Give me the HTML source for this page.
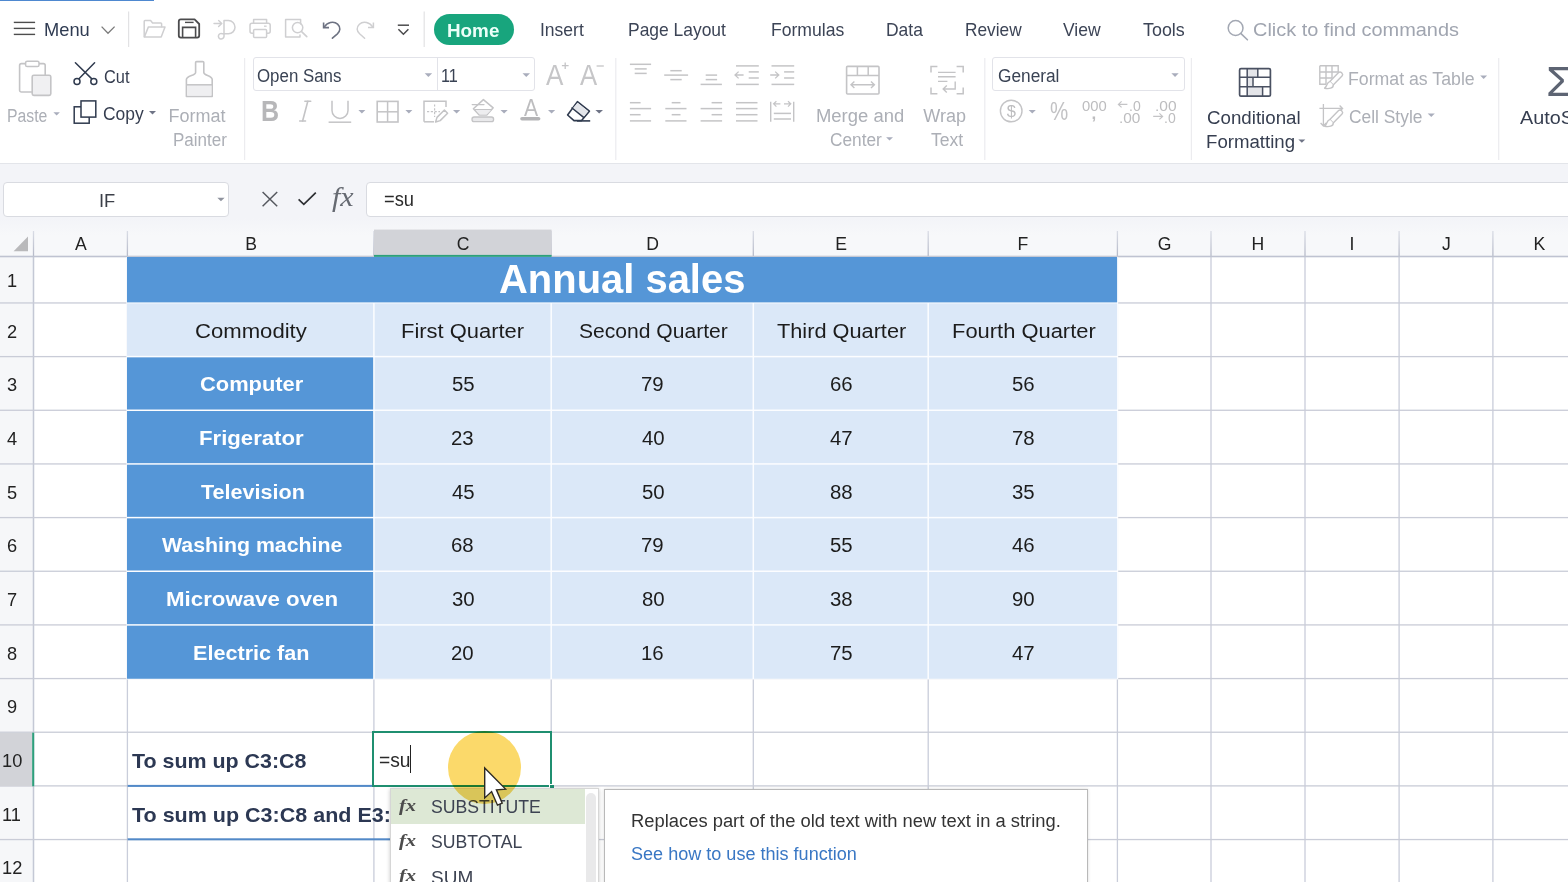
<!DOCTYPE html>
<html lang="en">
<head>
<meta charset="utf-8">
<title>Annual sales - Spreadsheet</title>
<style>
html,body{margin:0;padding:0;background:#fff;}
body{width:1568px;height:882px;overflow:hidden;position:relative;font-family:"Liberation Sans",sans-serif;}
#app{position:absolute;left:0;top:0;width:1568px;height:882px;overflow:hidden;background:#fff;}
#app div,#app svg,#app span.t{position:absolute;}
#app div{box-sizing:border-box;}
#app svg{overflow:visible;}
.t{white-space:nowrap;line-height:1;transform-origin:0 0;}

.gl{background:#c8ccd6;}
</style>
</head>
<body>
<div id="app">
<div style="left:0px;top:0px;width:1568px;height:164px;background:#fff;"></div>
<div style="left:0px;top:0px;width:153.8px;height:1.3px;background:#4e88d0;"></div>
<div style="left:0px;top:163px;width:1568px;height:1px;background:#e3e5ea;"></div>
<div style="left:0px;top:164px;width:1568px;height:66px;background:#f3f4f8;"></div>
<div style="left:3px;top:182px;width:226px;height:35px;background:#fff;border:1px solid #d9dbe1;border-radius:4px;"></div>
<div style="left:366px;top:182px;width:1220px;height:35px;background:#fff;border:1px solid #d9dbe1;border-radius:4px;"></div>
<div style="left:0px;top:230px;width:1568px;height:652px;background:#fff;"></div>
<div style="left:0px;top:218px;width:1568px;height:39px;background:linear-gradient(#f3f4f8,#f7f8fa 45%);"></div>
<div style="left:0px;top:257px;width:34px;height:625px;background:#f6f7f9;"></div>
<svg style="left:0px;top:0px;" width="1568" height="882" viewBox="0 0 1568 882" fill="none"><defs><linearGradient id="hs" x1="0" y1="0" x2="0" y2="1"><stop offset="0" stop-color="#d9dce5"/><stop offset="1" stop-color="#b4b8c7"/></linearGradient></defs><rect x="32.85" y="256.00" width="1.30" height="626.00" fill="#c9cdda"/><rect x="126.75" y="256.00" width="1.30" height="626.00" fill="#c9cdda"/><rect x="373.25" y="256.00" width="1.30" height="626.00" fill="#c9cdda"/><rect x="550.55" y="256.00" width="1.30" height="626.00" fill="#c9cdda"/><rect x="752.65" y="256.00" width="1.30" height="626.00" fill="#c9cdda"/><rect x="927.55" y="256.00" width="1.30" height="626.00" fill="#c9cdda"/><rect x="1116.75" y="256.00" width="1.30" height="626.00" fill="#c9cdda"/><rect x="1210.35" y="256.00" width="1.30" height="626.00" fill="#c9cdda"/><rect x="1304.35" y="256.00" width="1.30" height="626.00" fill="#c9cdda"/><rect x="1398.45" y="256.00" width="1.30" height="626.00" fill="#c9cdda"/><rect x="1492.25" y="256.00" width="1.30" height="626.00" fill="#c9cdda"/><rect x="32.85" y="256.00" width="1.30" height="626.00" fill="#c4c8d5"/><rect x="32.85" y="231" width="1.3" height="26" fill="url(#hs)"/><rect x="126.75" y="231" width="1.3" height="26" fill="url(#hs)"/><rect x="373.25" y="231" width="1.3" height="26" fill="url(#hs)"/><rect x="550.55" y="231" width="1.3" height="26" fill="url(#hs)"/><rect x="752.65" y="231" width="1.3" height="26" fill="url(#hs)"/><rect x="927.55" y="231" width="1.3" height="26" fill="url(#hs)"/><rect x="1116.75" y="231" width="1.3" height="26" fill="url(#hs)"/><rect x="1210.35" y="231" width="1.3" height="26" fill="url(#hs)"/><rect x="1304.35" y="231" width="1.3" height="26" fill="url(#hs)"/><rect x="1398.45" y="231" width="1.3" height="26" fill="url(#hs)"/><rect x="1492.25" y="231" width="1.3" height="26" fill="url(#hs)"/><rect x="0.00" y="255.85" width="1568.00" height="1.30" fill="#c9ccd7"/><rect x="0.00" y="302.30" width="1568.00" height="1.30" fill="#c9ccd7"/><rect x="0.00" y="355.96" width="1568.00" height="1.30" fill="#c9ccd7"/><rect x="0.00" y="409.62" width="1568.00" height="1.30" fill="#c9ccd7"/><rect x="0.00" y="463.28" width="1568.00" height="1.30" fill="#c9ccd7"/><rect x="0.00" y="516.94" width="1568.00" height="1.30" fill="#c9ccd7"/><rect x="0.00" y="570.60" width="1568.00" height="1.30" fill="#c9ccd7"/><rect x="0.00" y="624.26" width="1568.00" height="1.30" fill="#c9ccd7"/><rect x="0.00" y="677.92" width="1568.00" height="1.30" fill="#c9ccd7"/><rect x="0.00" y="731.58" width="1568.00" height="1.30" fill="#c9ccd7"/><rect x="0.00" y="785.24" width="1568.00" height="1.30" fill="#c9ccd7"/><rect x="0.00" y="838.90" width="1568.00" height="1.30" fill="#c9ccd7"/><rect x="0.00" y="255.80" width="1568.00" height="1.40" fill="#bfc3d1"/><rect x="374.00" y="229.60" width="177.60" height="26.90" fill="#d2d3d8"/><rect x="0.00" y="732.63" width="33.50" height="53.66" fill="#d2d3d8"/><rect x="374.00" y="254.90" width="177.60" height="2.10" fill="#2da07c"/><rect x="32.20" y="732.63" width="2.00" height="53.66" fill="#2da07c"/><rect x="126.40" y="256.90" width="991.80" height="422.57" fill="#fcfdff"/><rect x="127.00" y="257.00" width="990.10" height="45.40" fill="#5596d7"/><rect x="127.00" y="303.40" width="246.15" height="52.46" fill="#dbe8f8"/><rect x="374.65" y="303.40" width="175.80" height="52.46" fill="#dbe8f8"/><rect x="551.95" y="303.40" width="200.60" height="52.46" fill="#dbe8f8"/><rect x="754.05" y="303.40" width="173.40" height="52.46" fill="#dbe8f8"/><rect x="928.95" y="303.40" width="188.15" height="52.46" fill="#dbe8f8"/><rect x="127.00" y="357.36" width="246.15" height="52.16" fill="#5596d7"/><rect x="374.65" y="357.36" width="175.80" height="52.16" fill="#dbe8f8"/><rect x="551.95" y="357.36" width="200.60" height="52.16" fill="#dbe8f8"/><rect x="754.05" y="357.36" width="173.40" height="52.16" fill="#dbe8f8"/><rect x="928.95" y="357.36" width="188.15" height="52.16" fill="#dbe8f8"/><rect x="127.00" y="411.02" width="246.15" height="52.16" fill="#5596d7"/><rect x="374.65" y="411.02" width="175.80" height="52.16" fill="#dbe8f8"/><rect x="551.95" y="411.02" width="200.60" height="52.16" fill="#dbe8f8"/><rect x="754.05" y="411.02" width="173.40" height="52.16" fill="#dbe8f8"/><rect x="928.95" y="411.02" width="188.15" height="52.16" fill="#dbe8f8"/><rect x="127.00" y="464.68" width="246.15" height="52.16" fill="#5596d7"/><rect x="374.65" y="464.68" width="175.80" height="52.16" fill="#dbe8f8"/><rect x="551.95" y="464.68" width="200.60" height="52.16" fill="#dbe8f8"/><rect x="754.05" y="464.68" width="173.40" height="52.16" fill="#dbe8f8"/><rect x="928.95" y="464.68" width="188.15" height="52.16" fill="#dbe8f8"/><rect x="127.00" y="518.34" width="246.15" height="52.16" fill="#5596d7"/><rect x="374.65" y="518.34" width="175.80" height="52.16" fill="#dbe8f8"/><rect x="551.95" y="518.34" width="200.60" height="52.16" fill="#dbe8f8"/><rect x="754.05" y="518.34" width="173.40" height="52.16" fill="#dbe8f8"/><rect x="928.95" y="518.34" width="188.15" height="52.16" fill="#dbe8f8"/><rect x="127.00" y="572.00" width="246.15" height="52.16" fill="#5596d7"/><rect x="374.65" y="572.00" width="175.80" height="52.16" fill="#dbe8f8"/><rect x="551.95" y="572.00" width="200.60" height="52.16" fill="#dbe8f8"/><rect x="754.05" y="572.00" width="173.40" height="52.16" fill="#dbe8f8"/><rect x="928.95" y="572.00" width="188.15" height="52.16" fill="#dbe8f8"/><rect x="127.00" y="625.66" width="246.15" height="53.11" fill="#5596d7"/><rect x="374.65" y="625.66" width="175.80" height="53.11" fill="#dbe8f8"/><rect x="551.95" y="625.66" width="200.60" height="53.11" fill="#dbe8f8"/><rect x="754.05" y="625.66" width="173.40" height="53.11" fill="#dbe8f8"/><rect x="928.95" y="625.66" width="188.15" height="53.11" fill="#dbe8f8"/></svg>
<svg style="left:0;top:230px" width="34" height="27" viewBox="0 0 34 27"><path d="M28 6.6 V21.2 H13.6 Z" fill="#b9b9bb"/></svg>
<div style="left:433.5px;top:13.6px;width:80px;height:31.4px;background:#18a57d;border-radius:16px;"></div>
<div style="left:253.3px;top:57.3px;width:282.2px;height:33.6px;border:1px solid #e2e3e9;border-radius:3px;background:#fff;"></div>
<div style="left:437px;top:58px;width:1px;height:32px;background:#e2e3e9;"></div>
<div style="left:992.2px;top:57.3px;width:192.6px;height:33.6px;border:1px solid #e2e3e9;border-radius:3px;background:#fff;"></div>
<svg style="left:0px;top:0px;" width="1568" height="240" viewBox="0 0 1568 240" fill="none"><line x1="13.8" y1="22.4" x2="35.1" y2="22.4" stroke="#4d4d4d" stroke-width="1.4" stroke-linecap="butt"/><line x1="13.8" y1="28.4" x2="35.1" y2="28.4" stroke="#4d4d4d" stroke-width="1.4" stroke-linecap="butt"/><line x1="13.8" y1="34.4" x2="35.1" y2="34.4" stroke="#4d4d4d" stroke-width="1.4" stroke-linecap="butt"/><path d="M101.6 26.6 L108 33.2 L114.6 26.6" stroke="#7a7a7a" stroke-width="1.3" fill="none" stroke-linecap="butt" stroke-linejoin="miter"/><line x1="128.6" y1="11.5" x2="128.6" y2="47" stroke="#e2e2e4" stroke-width="1.2" stroke-linecap="butt"/><line x1="424.2" y1="11.5" x2="424.2" y2="47" stroke="#e2e2e4" stroke-width="1.2" stroke-linecap="butt"/><path d="M144.2 36.8 V21.4 a0.8 0.8 0 0 1 .8 -.8 h5.6 l2 2.4 h8.2 a.8 .8 0 0 1 .8 .8 v3" stroke="#cfcfd1" stroke-width="1.5" fill="none" stroke-linecap="round" stroke-linejoin="round"/><path d="M144.4 37 L148.4 26.9 H165 L161.2 37 Z" stroke="#cfcfd1" stroke-width="1.5" fill="none" stroke-linecap="round" stroke-linejoin="round"/><path d="M180.8 19.4 H194.6 L199.2 24 V35.6 a2 2 0 0 1 -2 2 H180.8 a2 2 0 0 1 -2 -2 V21.4 a2 2 0 0 1 2 -2 Z" stroke="#4b4b4d" stroke-width="1.8" fill="none" stroke-linecap="round" stroke-linejoin="round"/><path d="M182.6 37.2 V27.4 H195.6 V37.2" stroke="#4b4b4d" stroke-width="1.6" fill="none" stroke-linecap="butt" stroke-linejoin="miter"/><line x1="185" y1="22.4" x2="193.6" y2="22.4" stroke="#4b4b4d" stroke-width="1.4" stroke-linecap="butt"/><path d="M214 23.5 H221.6 M218.6 20.6 L221.8 23.5 L218.6 26.6" stroke="#cfcfd1" stroke-width="1.4" fill="none" stroke-linecap="round" stroke-linejoin="round"/><path d="M224 35.4 V20.6 H228.4 a6.6 6.6 0 0 1 0 13.2 H222.6 a2.8 2.8 0 1 0 1.4 2.6 Z" stroke="#cfcfd1" stroke-width="1.5" fill="none" stroke-linecap="round" stroke-linejoin="round"/><path d="M253.6 23.2 V19.4 H266.6 V23.2" stroke="#cfcfd1" stroke-width="1.5" fill="none" stroke-linecap="round" stroke-linejoin="round"/><rect x="250" y="23.2" width="20.2" height="10" rx="2" stroke="#cfcfd1" stroke-width="1.5" fill="none"/><rect x="253.6" y="29.6" width="13" height="8" rx="1" stroke="#cfcfd1" stroke-width="1.5" fill="#fff"/><line x1="264" y1="26.2" x2="266.6" y2="26.2" stroke="#cfcfd1" stroke-width="1.3" stroke-linecap="butt"/><path d="M300 35 V37 H285.6 V19.4 H300.6 V24" stroke="#cfcfd1" stroke-width="1.5" fill="none" stroke-linecap="round" stroke-linejoin="round"/><circle cx="297.6" cy="27.6" r="5.2" stroke="#cfcfd1" stroke-width="1.5"/><line x1="301.6" y1="31.6" x2="306.8" y2="36.6" stroke="#cfcfd1" stroke-width="1.6" stroke-linecap="round"/><path d="M323.6 22.6 V27.6 H329" stroke="#6d7282" stroke-width="1.6" fill="none" stroke-linecap="butt" stroke-linejoin="miter"/><path d="M324.2 27.2 C327 22.4 333.6 20.6 337.6 24.2 C341 27.4 340.2 31.2 337.4 33.8 L332.4 38.2" stroke="#6d7282" stroke-width="1.6" fill="none" stroke-linecap="round" stroke-linejoin="round"/><path d="M373.4 22.6 V27.6 H368" stroke="#cfcfd1" stroke-width="1.5" fill="none" stroke-linecap="butt" stroke-linejoin="miter"/><path d="M372.8 27.2 C370 22.4 363.4 20.6 359.4 24.2 C356 27.4 356.8 31.2 359.6 33.8 L364.6 38.2" stroke="#cfcfd1" stroke-width="1.5" fill="none" stroke-linecap="round" stroke-linejoin="round"/><line x1="397.8" y1="25.2" x2="409" y2="25.2" stroke="#4b4b4d" stroke-width="1.5" stroke-linecap="butt"/><path d="M398.4 29.2 L403.4 34.2 L408.4 29.2" stroke="#4b4b4d" stroke-width="1.5" fill="none" stroke-linecap="butt" stroke-linejoin="miter"/><circle cx="1235.6" cy="28" r="7.4" stroke="#a3a8b3" stroke-width="1.5"/><line x1="1241" y1="33.6" x2="1247.4" y2="39.8" stroke="#a3a8b3" stroke-width="1.6" stroke-linecap="round"/><line x1="244.6" y1="58" x2="244.6" y2="160" stroke="#ececef" stroke-width="1.2" stroke-linecap="butt"/><line x1="615.8" y1="58" x2="615.8" y2="160" stroke="#ececef" stroke-width="1.2" stroke-linecap="butt"/><line x1="984.8" y1="58" x2="984.8" y2="160" stroke="#ececef" stroke-width="1.2" stroke-linecap="butt"/><line x1="1191.4" y1="58" x2="1191.4" y2="160" stroke="#ececef" stroke-width="1.2" stroke-linecap="butt"/><line x1="1498.7" y1="58" x2="1498.7" y2="160" stroke="#ececef" stroke-width="1.2" stroke-linecap="butt"/><path d="M424.7 73.3H432.1L428.4 77Z" fill="#a9adbc"/><path d="M522.5 73.3H530L526.25 77Z" fill="#a9adbc"/><path d="M1171.4 73.3H1178.7L1175.0500000000002 77Z" fill="#a9adbc"/><path d="M53.4 112.3H59.9L56.65 115.6Z" fill="#a9adbc"/><path d="M453 110H460.2L456.6 113.5Z" fill="#a9adbc"/><path d="M500.5 110H507.7L504.1 113.5Z" fill="#a9adbc"/><path d="M548 110H555.2L551.6 113.5Z" fill="#a9adbc"/><path d="M358.4 110H365.4L361.9 113.5Z" fill="#a9adbc"/><path d="M405.4 110H412.4L408.9 113.5Z" fill="#a9adbc"/><path d="M1028.7 110H1035.8L1032.25 113.5Z" fill="#a9adbc"/><path d="M886.1 137.3H893L889.55 140.6Z" fill="#a9adbc"/><path d="M1480.2 75.6H1487.1L1483.65 79.1Z" fill="#a9adbc"/><path d="M1427.7 113.4H1434.8L1431.25 116.9Z" fill="#a9adbc"/><path d="M149 111H156L152.5 114.6Z" fill="#6f7486"/><path d="M595.4 110H603L599.2 113.5Z" fill="#6f7486"/><path d="M1298.4 139.4H1305.3L1301.85 142.7Z" fill="#6f7486"/><path d="M31.8 92 H21.4 a1.8 1.8 0 0 1 -1.8 -1.8 V65.4 a1.8 1.8 0 0 1 1.8 -1.8 H43.4 a1.8 1.8 0 0 1 1.8 1.8 V75" stroke="#c4c4c6" stroke-width="1.6" fill="none" stroke-linecap="round" stroke-linejoin="round"/><rect x="25.6" y="61.2" width="13.4" height="5.4" rx="1.6" stroke="#c4c4c6" stroke-width="1.5" fill="#fff"/><rect x="32.2" y="75.2" width="18.6" height="20.2" rx="1.6" stroke="#c4c4c6" stroke-width="1.6" fill="#f0f0f2"/><line x1="75.4" y1="62.8" x2="91.6" y2="78.6" stroke="#2f3a4e" stroke-width="1.5" stroke-linecap="round"/><line x1="94.6" y1="62.8" x2="79.2" y2="78.6" stroke="#2f3a4e" stroke-width="1.5" stroke-linecap="round"/><circle cx="77" cy="81.4" r="3" stroke="#2f3a4e" stroke-width="1.5"/><circle cx="93.8" cy="81.4" r="3" stroke="#2f3a4e" stroke-width="1.5"/><rect x="74.2" y="106.8" width="15" height="16.4" rx="0" stroke="#2f3a4e" stroke-width="1.5" fill="none"/><rect x="81" y="100.9" width="14.8" height="16.2" rx="0" stroke="#2f3a4e" stroke-width="1.5" fill="#fff"/><path d="M195.6 72.4 V62.6 a1 1 0 0 1 1 -1 H202.8 a1 1 0 0 1 1 1 V72.4 C203.8 75.6 212.2 75.4 212.2 79.6 V96.4 H186.4 V79.6 C186.4 75.4 195.6 75.6 195.6 72.4 Z" stroke="#c4c4c6" stroke-width="1.6" fill="none" stroke-linecap="round" stroke-linejoin="round"/><rect x="187.2" y="85" width="24.2" height="10.8" fill="#efeff1"/><line x1="186.4" y1="84.8" x2="212.2" y2="84.8" stroke="#c4c4c6" stroke-width="1.5" stroke-linecap="butt"/><path d="M307.8 101.2 L302.6 121" stroke="#c4c4c6" stroke-width="1.6" fill="none" stroke-linecap="round" stroke-linejoin="round"/><path d="M304.8 101.2 H310.8 M299.6 121 H305.6" stroke="#c4c4c6" stroke-width="1.4" fill="none" stroke-linecap="round" stroke-linejoin="round"/><path d="M332 100.8 V110.4 a8 8 0 0 0 16 0 V100.8" stroke="#c4c4c6" stroke-width="1.5" fill="none" stroke-linecap="butt" stroke-linejoin="round"/><line x1="328.6" y1="122.2" x2="351.2" y2="122.2" stroke="#c4c4c6" stroke-width="1.5" stroke-linecap="butt"/><rect x="377.2" y="101.4" width="20.8" height="20.6" rx="0" stroke="#c4c4c6" stroke-width="1.6" fill="none"/><line x1="387.6" y1="101.4" x2="387.6" y2="122" stroke="#c4c4c6" stroke-width="1.5" stroke-linecap="butt"/><line x1="377.2" y1="111.8" x2="398" y2="111.8" stroke="#c4c4c6" stroke-width="1.5" stroke-linecap="butt"/><path d="M424 121.8 V101.2 H446 V107" stroke="#c4c4c6" stroke-width="1.5" fill="none" stroke-linecap="butt" stroke-linejoin="miter"/><path d="M424 121.8 H434" stroke="#c4c4c6" stroke-width="1.5" fill="none" stroke-linecap="butt" stroke-linejoin="round"/><path d="M427 111.6 H440 M434.6 104.4 V117" stroke="#c4c4c6" stroke-width="1.2" stroke-dasharray="2.2 1.6"/><path d="M435.6 122 L437 117.4 L444.4 110 L447.6 113.2 L440.2 120.6 Z" stroke="#c4c4c6" stroke-width="1.5" fill="#fff" stroke-linecap="round" stroke-linejoin="round"/><path d="M483.4 99.6 L493.2 107.8 L486.8 115 H479.2 L473.4 108.8 Z" stroke="#c4c4c6" stroke-width="1.5" fill="#fff" stroke-linecap="round" stroke-linejoin="round"/><path d="M472.2 104.6 H484 M475.4 109.6 H491.6" stroke="#c4c4c6" stroke-width="1.3" fill="none" stroke-linecap="round" stroke-linejoin="round"/><path d="M476 110.2 H491 L486.6 114.6 H479.6 Z" fill="#ededef"/><rect x="472" y="117" width="21.6" height="4.6" rx="2.2" stroke="#c4c4c6" stroke-width="1.3" fill="#e9e9eb"/><rect x="520.2" y="117" width="20.2" height="3.6" rx="1.8" fill="#b4b4b6"/><path d="M577.4 101.6 L589.4 111.2 L581.6 120.6 H574 L567.6 115 Z" stroke="#2f3a4e" stroke-width="1.6" fill="#fff" stroke-linecap="round" stroke-linejoin="round"/><path d="M577.6 102.8 L588.2 111.2 L583.4 117 L572.6 108.6 Z" fill="#e3e5ea"/><path d="M572 108 L583.6 117.4" stroke="#2f3a4e" stroke-width="1.5" fill="none" stroke-linecap="round" stroke-linejoin="round"/><line x1="577" y1="120.9" x2="590.2" y2="120.9" stroke="#2f3a4e" stroke-width="1.6" stroke-linecap="butt"/><path d="M561.9 65.7 H568.6 M565.2 62.4 V69" stroke="#c4c4c6" stroke-width="1.3" fill="none" stroke-linecap="butt" stroke-linejoin="round"/><path d="M596.6 66 H603.8" stroke="#c4c4c6" stroke-width="1.3" fill="none" stroke-linecap="butt" stroke-linejoin="round"/><line x1="629.9" y1="64.3" x2="651.1" y2="64.3" stroke="#c4c4c6" stroke-width="1.5" stroke-linecap="butt"/><line x1="634.7" y1="68.9" x2="646.7" y2="68.9" stroke="#c4c4c6" stroke-width="1.5" stroke-linecap="butt"/><line x1="634.7" y1="73.4" x2="646.7" y2="73.4" stroke="#c4c4c6" stroke-width="1.5" stroke-linecap="butt"/><line x1="670.3" y1="70.7" x2="681.7" y2="70.7" stroke="#c4c4c6" stroke-width="1.5" stroke-linecap="butt"/><line x1="664.2" y1="75.1" x2="688.1" y2="75.1" stroke="#c4c4c6" stroke-width="1.5" stroke-linecap="butt"/><line x1="670.3" y1="79.6" x2="681.7" y2="79.6" stroke="#c4c4c6" stroke-width="1.5" stroke-linecap="butt"/><line x1="705.7" y1="75.1" x2="717.1" y2="75.1" stroke="#c4c4c6" stroke-width="1.5" stroke-linecap="butt"/><line x1="705.7" y1="79.6" x2="717.1" y2="79.6" stroke="#c4c4c6" stroke-width="1.5" stroke-linecap="butt"/><line x1="700.6" y1="84.4" x2="721.9" y2="84.4" stroke="#c4c4c6" stroke-width="1.5" stroke-linecap="butt"/><line x1="736" y1="65.9" x2="758.8" y2="65.9" stroke="#c4c4c6" stroke-width="1.5" stroke-linecap="butt"/><line x1="748.7" y1="71.9" x2="758.8" y2="71.9" stroke="#c4c4c6" stroke-width="1.5" stroke-linecap="butt"/><line x1="748.7" y1="78" x2="758.8" y2="78" stroke="#c4c4c6" stroke-width="1.5" stroke-linecap="butt"/><line x1="736" y1="84.4" x2="758.8" y2="84.4" stroke="#c4c4c6" stroke-width="1.5" stroke-linecap="butt"/><line x1="771.5" y1="65.9" x2="794.2" y2="65.9" stroke="#c4c4c6" stroke-width="1.5" stroke-linecap="butt"/><line x1="784.1" y1="71.9" x2="794.2" y2="71.9" stroke="#c4c4c6" stroke-width="1.5" stroke-linecap="butt"/><line x1="784.1" y1="78" x2="794.2" y2="78" stroke="#c4c4c6" stroke-width="1.5" stroke-linecap="butt"/><line x1="771.5" y1="84.4" x2="794.2" y2="84.4" stroke="#c4c4c6" stroke-width="1.5" stroke-linecap="butt"/><line x1="629.9" y1="102.7" x2="640.6" y2="102.7" stroke="#c4c4c6" stroke-width="1.5" stroke-linecap="butt"/><line x1="629.9" y1="108.6" x2="651.1" y2="108.6" stroke="#c4c4c6" stroke-width="1.5" stroke-linecap="butt"/><line x1="629.9" y1="114.7" x2="640.6" y2="114.7" stroke="#c4c4c6" stroke-width="1.5" stroke-linecap="butt"/><line x1="629.9" y1="120.9" x2="651.1" y2="120.9" stroke="#c4c4c6" stroke-width="1.5" stroke-linecap="butt"/><line x1="671.7" y1="102.7" x2="680.5" y2="102.7" stroke="#c4c4c6" stroke-width="1.5" stroke-linecap="butt"/><line x1="665.3" y1="108.6" x2="686.5" y2="108.6" stroke="#c4c4c6" stroke-width="1.5" stroke-linecap="butt"/><line x1="671.7" y1="114.7" x2="680.5" y2="114.7" stroke="#c4c4c6" stroke-width="1.5" stroke-linecap="butt"/><line x1="665.3" y1="120.9" x2="686.5" y2="120.9" stroke="#c4c4c6" stroke-width="1.5" stroke-linecap="butt"/><line x1="711.6" y1="102.7" x2="722.1" y2="102.7" stroke="#c4c4c6" stroke-width="1.5" stroke-linecap="butt"/><line x1="700.6" y1="108.6" x2="722.1" y2="108.6" stroke="#c4c4c6" stroke-width="1.5" stroke-linecap="butt"/><line x1="711.6" y1="114.7" x2="722.1" y2="114.7" stroke="#c4c4c6" stroke-width="1.5" stroke-linecap="butt"/><line x1="700.6" y1="120.9" x2="722.1" y2="120.9" stroke="#c4c4c6" stroke-width="1.5" stroke-linecap="butt"/><line x1="736" y1="102.7" x2="757.5" y2="102.7" stroke="#c4c4c6" stroke-width="1.5" stroke-linecap="butt"/><line x1="736" y1="108.6" x2="757.5" y2="108.6" stroke="#c4c4c6" stroke-width="1.5" stroke-linecap="butt"/><line x1="736" y1="114.7" x2="757.5" y2="114.7" stroke="#c4c4c6" stroke-width="1.5" stroke-linecap="butt"/><line x1="736" y1="120.9" x2="757.5" y2="120.9" stroke="#c4c4c6" stroke-width="1.5" stroke-linecap="butt"/><line x1="773.8" y1="113.4" x2="791" y2="113.4" stroke="#c4c4c6" stroke-width="1.5" stroke-linecap="butt"/><line x1="773.8" y1="119" x2="791" y2="119" stroke="#c4c4c6" stroke-width="1.5" stroke-linecap="butt"/><path d="M743.6 75 H735.2 M738.6 71.6 L735 75 L738.6 78.4" stroke="#c4c4c6" stroke-width="1.3" fill="none" stroke-linecap="butt" stroke-linejoin="miter"/><path d="M770.2 75 H778.6 M775.2 71.6 L778.8 75 L775.2 78.4" stroke="#c4c4c6" stroke-width="1.3" fill="none" stroke-linecap="butt" stroke-linejoin="miter"/><line x1="770.7" y1="101.8" x2="770.7" y2="121.8" stroke="#c4c4c6" stroke-width="1.4" stroke-linecap="butt"/><line x1="793.7" y1="101.8" x2="793.7" y2="121.8" stroke="#c4c4c6" stroke-width="1.4" stroke-linecap="butt"/><path d="M780.4 103.8 H773.6 M776.4 101.2 L773.6 103.8 L776.4 106.6" stroke="#c4c4c6" stroke-width="1.2" fill="none" stroke-linecap="butt" stroke-linejoin="miter"/><path d="M784 103.8 H790.8 M788 101.2 L790.8 103.8 L788 106.6" stroke="#c4c4c6" stroke-width="1.2" fill="none" stroke-linecap="butt" stroke-linejoin="miter"/><rect x="846.6" y="66.4" width="32.4" height="27.6" rx="1" stroke="#c4c4c6" stroke-width="1.6" fill="none"/><line x1="846.6" y1="75.6" x2="879" y2="75.6" stroke="#c4c4c6" stroke-width="1.5" stroke-linecap="butt"/><line x1="857.4" y1="66.4" x2="857.4" y2="75.6" stroke="#c4c4c6" stroke-width="1.5" stroke-linecap="butt"/><line x1="868.2" y1="66.4" x2="868.2" y2="75.6" stroke="#c4c4c6" stroke-width="1.5" stroke-linecap="butt"/><path d="M851 84.8 H874.4 M854.4 81.6 L851 84.8 L854.4 88 M871 81.6 L874.4 84.8 L871 88" stroke="#c4c4c6" stroke-width="1.4" fill="none" stroke-linecap="butt" stroke-linejoin="miter"/><path d="M931 72.6 V66.6 H937.4 M956.6 66.6 H963.2 V72.6 M963.2 87.6 V93.8 H956.6 M937.4 93.8 H931 V87.6" stroke="#c4c4c6" stroke-width="1.5" fill="none" stroke-linecap="butt" stroke-linejoin="miter"/><path d="M938 72.4 H955.6 M938 76.8 H955.6 M938 81.4 H947.4" stroke="#c4c4c6" stroke-width="1.4" fill="none" stroke-linecap="butt" stroke-linejoin="round"/><path d="M955.2 81.6 V89 H943.4 M946.8 85.6 L943.2 89 L946.8 92.4" stroke="#c4c4c6" stroke-width="1.4" fill="none" stroke-linecap="butt" stroke-linejoin="miter"/><circle cx="1011.2" cy="111" r="10.8" stroke="#c4c4c6" stroke-width="1.4"/><path d="M1127.4 104.4 H1118.4 M1121.6 101.4 L1118.4 104.4 L1121.6 107.4" stroke="#c4c4c6" stroke-width="1.2" fill="none" stroke-linecap="butt" stroke-linejoin="miter"/><path d="M1153.2 116.4 H1162.6 M1159.4 113.4 L1162.6 116.4 L1159.4 119.4" stroke="#c4c4c6" stroke-width="1.2" fill="none" stroke-linecap="butt" stroke-linejoin="miter"/><rect x="1247.2" y="68.6" width="10.6" height="8.6" fill="#e4e5e9"/><rect x="1247.2" y="77.2" width="5.8" height="9.6" fill="#e4e5e9"/><rect x="1247.2" y="86.8" width="15.4" height="9.4" fill="#e4e5e9"/><rect x="1239.6" y="68.6" width="30.8" height="27.6" rx="1.4" stroke="#4a5162" stroke-width="1.7" fill="none"/><path d="M1239.6 77.2 H1270.4 M1239.6 86.8 H1270.4 M1247.2 68.6 V96.2 M1257.8 68.6 V77.2 M1253 77.2 V86.8 M1262.6 86.8 V96.2" stroke="#4a5162" stroke-width="1.5" fill="none" stroke-linecap="butt" stroke-linejoin="round"/><path d="M1319.8 65.8 H1338.2 V72 M1319.8 65.8 V84.2 H1326 M1319.8 72 H1338.2 M1319.8 78 H1332 M1326 65.8 V84.2 M1332 65.8 V78" stroke="#c4c4c6" stroke-width="1.4" fill="none" stroke-linecap="butt" stroke-linejoin="miter"/><path d="M1329.8 81.39999999999999 L1338.6000000000001 72.6 a2 2 0 0 1 2.8 0 l0.6 .6 a2 2 0 0 1 0 2.8 L1333.2 85.0 Z" stroke="#c4c4c6" stroke-width="1.4" fill="#fff" stroke-linecap="round" stroke-linejoin="round"/><path d="M1329.8 81.6 C1326.6000000000001 82.0 1327.6000000000001 86.19999999999999 1324.6000000000001 88.19999999999999 C1328.8 89.19999999999999 1333.6000000000001 88.19999999999999 1333.2 85.0" stroke="#c4c4c6" stroke-width="1.4" fill="#fff" stroke-linecap="round" stroke-linejoin="round"/><path d="M1323.4 104 V126 M1319.4 108.4 H1342.6 M1339.6 105.6 L1342.6 108.4 L1339.6 111.2 M1320.6 123 L1323.4 126 L1326.2 123" stroke="#c4c4c6" stroke-width="1.3" fill="none" stroke-linecap="butt" stroke-linejoin="miter"/><path d="M1329.8 119.39999999999999 L1338.6000000000001 110.6 a2 2 0 0 1 2.8 0 l0.6 .6 a2 2 0 0 1 0 2.8 L1333.2 123.0 Z" stroke="#c4c4c6" stroke-width="1.4" fill="#fff" stroke-linecap="round" stroke-linejoin="round"/><path d="M1329.8 119.6 C1326.6000000000001 120.0 1327.6000000000001 124.19999999999999 1324.6000000000001 126.19999999999999 C1328.8 127.19999999999999 1333.6000000000001 126.19999999999999 1333.2 123.0" stroke="#c4c4c6" stroke-width="1.4" fill="#fff" stroke-linecap="round" stroke-linejoin="round"/><path d="M217.3 197.7H224.6L220.95 201.3Z" fill="#8f939e"/><path d="M262.6 192 L277.2 206.2 M277.2 192 L262.6 206.2" stroke="#55585f" stroke-width="1.5" fill="none" stroke-linecap="butt" stroke-linejoin="round"/><path d="M298.6 199.4 L303.8 204.4 L315.8 192.6" stroke="#2d2f33" stroke-width="1.7" fill="none" stroke-linecap="butt" stroke-linejoin="miter"/></svg>
<svg style="left:0px;top:0px;" width="1568" height="882" viewBox="0 0 1568 882" fill="none"><rect x="127.6" y="784.9" width="246" height="2" fill="#5289c8"/><rect x="127.6" y="838.3" width="264" height="2" fill="#5289c8"/></svg>
<div style="left:372.4px;top:731.2px;width:180px;height:56px;background:#fff;border:2px solid #1f8f70;"></div>
<div style="left:548.6px;top:783.6px;width:5.4px;height:4.6px;background:#1f8f70;border-left:1px solid #fff;border-top:1px solid #fff;"></div>
<div style="left:410px;top:744.8px;width:1.1px;height:28px;background:#222;z-index:3;"></div>
<div style="left:389.6px;top:788px;width:209.4px;height:100px;background:#fff;border:1px solid #d6d6d6;box-shadow:0 1px 4px rgba(0,0,0,.22);z-index:4;"></div>
<div style="left:390.8px;top:788.8px;width:193.8px;height:35.4px;background:#dde8d5;z-index:5;"></div>
<div style="left:585.8px;top:793.4px;width:10.2px;height:100px;background:#e9e9ea;border-radius:5px;z-index:5;"></div>
<div style="left:604px;top:789.4px;width:483.6px;height:100px;background:#fff;border:1px solid #b9b9b9;box-shadow:0 0 3px rgba(0,0,0,.15);z-index:4;"></div>
<div style="left:448px;top:730.8px;width:73px;height:73px;background:#fbd96a;border-radius:50%;z-index:7;mix-blend-mode:multiply;"></div>
<svg style="left:480px;top:764px;z-index:8" width="32" height="46" viewBox="0 0 32 46" fill="none"><path d="M4.7 3.9 V34 L11.6 27.6 L17.5 41.2 L22.2 39.2 L16.4 25.9 L25.6 25.1 Z" fill="#fff" stroke="#2e2a22" stroke-width="1.4" stroke-linejoin="miter"/></svg>
<span class="t" style="left:75.05px;top:236px;font-size:17.6px;color:#222;">A</span>
<span class="t" style="left:245.25px;top:236px;font-size:17.6px;color:#222;">B</span>
<span class="t" style="left:456.65px;top:236px;font-size:17.6px;color:#222;">C</span>
<span class="t" style="left:646.35px;top:236px;font-size:17.6px;color:#222;">D</span>
<span class="t" style="left:835.35px;top:236px;font-size:17.6px;color:#222;">E</span>
<span class="t" style="left:1017.40px;top:236px;font-size:17.6px;color:#222;">F</span>
<span class="t" style="left:1157.70px;top:236px;font-size:17.6px;color:#222;">G</span>
<span class="t" style="left:1251.50px;top:236px;font-size:17.6px;color:#222;">H</span>
<span class="t" style="left:1349.55px;top:236px;font-size:17.6px;color:#222;">I</span>
<span class="t" style="left:1442.00px;top:236px;font-size:17.6px;color:#222;">J</span>
<span class="t" style="left:1533.45px;top:236px;font-size:17.6px;color:#222;">K</span>
<span class="t" style="left:6.61px;top:272px;font-size:18.6px;color:#222;transform:scaleX(0.9800);">1</span>
<span class="t" style="left:7.10px;top:323px;font-size:18.6px;color:#222;transform:scaleX(0.9800);">2</span>
<span class="t" style="left:7.10px;top:376px;font-size:18.6px;color:#222;transform:scaleX(0.9800);">3</span>
<span class="t" style="left:7.10px;top:430px;font-size:18.6px;color:#222;transform:scaleX(0.9800);">4</span>
<span class="t" style="left:7.10px;top:484px;font-size:18.6px;color:#222;transform:scaleX(0.9800);">5</span>
<span class="t" style="left:7.10px;top:537px;font-size:18.6px;color:#222;transform:scaleX(0.9800);">6</span>
<span class="t" style="left:7.10px;top:591px;font-size:18.6px;color:#222;transform:scaleX(0.9800);">7</span>
<span class="t" style="left:7.10px;top:645px;font-size:18.6px;color:#222;transform:scaleX(0.9800);">8</span>
<span class="t" style="left:7.10px;top:698px;font-size:18.6px;color:#222;transform:scaleX(0.9800);">9</span>
<span class="t" style="left:1.54px;top:752px;font-size:18.6px;color:#222;transform:scaleX(0.9800);">10</span>
<span class="t" style="left:2.22px;top:806px;font-size:18.6px;color:#222;transform:scaleX(0.9800);">11</span>
<span class="t" style="left:1.54px;top:859px;font-size:18.6px;color:#222;transform:scaleX(0.9800);">12</span>
<span class="t" style="left:499.33px;top:259px;font-size:41px;color:#fff;transform:scaleX(0.9740);font-weight:700;">Annual sales</span>
<span class="t" style="left:195.09px;top:321px;font-size:20px;color:#1c1c1c;transform:scaleX(1.1055);">Commodity</span>
<span class="t" style="left:401.20px;top:321px;font-size:20px;color:#1c1c1c;transform:scaleX(1.0970);">First Quarter</span>
<span class="t" style="left:579.20px;top:321px;font-size:20px;color:#1c1c1c;transform:scaleX(1.0535);">Second Quarter</span>
<span class="t" style="left:776.50px;top:321px;font-size:20px;color:#1c1c1c;transform:scaleX(1.0867);">Third Quarter</span>
<span class="t" style="left:951.60px;top:321px;font-size:20px;color:#1c1c1c;transform:scaleX(1.0958);">Fourth Quarter</span>
<span class="t" style="left:200.00px;top:374px;font-size:20px;color:#fff;transform:scaleX(1.0934);font-weight:700;">Computer</span>
<span class="t" style="left:451.97px;top:374px;font-size:20px;color:#1c1c1c;transform:scaleX(1.0200);">55</span>
<span class="t" style="left:641.16px;top:374px;font-size:20px;color:#1c1c1c;transform:scaleX(1.0200);">79</span>
<span class="t" style="left:829.66px;top:374px;font-size:20px;color:#1c1c1c;transform:scaleX(1.0200);">66</span>
<span class="t" style="left:1012.22px;top:374px;font-size:20px;color:#1c1c1c;transform:scaleX(1.0200);">56</span>
<span class="t" style="left:198.69px;top:428px;font-size:20px;color:#fff;transform:scaleX(1.1070);font-weight:700;">Frigerator</span>
<span class="t" style="left:451.46px;top:428px;font-size:20px;color:#1c1c1c;transform:scaleX(1.0200);">23</span>
<span class="t" style="left:641.67px;top:428px;font-size:20px;color:#1c1c1c;transform:scaleX(1.0200);">40</span>
<span class="t" style="left:830.17px;top:428px;font-size:20px;color:#1c1c1c;transform:scaleX(1.0200);">47</span>
<span class="t" style="left:1011.71px;top:428px;font-size:20px;color:#1c1c1c;transform:scaleX(1.0200);">78</span>
<span class="t" style="left:200.90px;top:482px;font-size:20px;color:#fff;transform:scaleX(1.0787);font-weight:700;">Television</span>
<span class="t" style="left:451.97px;top:482px;font-size:20px;color:#1c1c1c;transform:scaleX(1.0200);">45</span>
<span class="t" style="left:641.67px;top:482px;font-size:20px;color:#1c1c1c;transform:scaleX(1.0200);">50</span>
<span class="t" style="left:830.17px;top:482px;font-size:20px;color:#1c1c1c;transform:scaleX(1.0200);">88</span>
<span class="t" style="left:1012.22px;top:482px;font-size:20px;color:#1c1c1c;transform:scaleX(1.0200);">35</span>
<span class="t" style="left:161.50px;top:535px;font-size:20px;color:#fff;transform:scaleX(1.0652);font-weight:700;">Washing machine</span>
<span class="t" style="left:451.46px;top:535px;font-size:20px;color:#1c1c1c;transform:scaleX(1.0200);">68</span>
<span class="t" style="left:641.16px;top:535px;font-size:20px;color:#1c1c1c;transform:scaleX(1.0200);">79</span>
<span class="t" style="left:830.17px;top:535px;font-size:20px;color:#1c1c1c;transform:scaleX(1.0200);">55</span>
<span class="t" style="left:1012.22px;top:535px;font-size:20px;color:#1c1c1c;transform:scaleX(1.0200);">46</span>
<span class="t" style="left:166.09px;top:589px;font-size:20px;color:#fff;transform:scaleX(1.1137);font-weight:700;">Microwave oven</span>
<span class="t" style="left:451.97px;top:589px;font-size:20px;color:#1c1c1c;transform:scaleX(1.0200);">30</span>
<span class="t" style="left:641.67px;top:589px;font-size:20px;color:#1c1c1c;transform:scaleX(1.0200);">80</span>
<span class="t" style="left:830.17px;top:589px;font-size:20px;color:#1c1c1c;transform:scaleX(1.0200);">38</span>
<span class="t" style="left:1012.22px;top:589px;font-size:20px;color:#1c1c1c;transform:scaleX(1.0200);">90</span>
<span class="t" style="left:192.92px;top:643px;font-size:20px;color:#fff;transform:scaleX(1.0804);font-weight:700;">Electric fan</span>
<span class="t" style="left:451.46px;top:643px;font-size:20px;color:#1c1c1c;transform:scaleX(1.0200);">20</span>
<span class="t" style="left:641.16px;top:643px;font-size:20px;color:#1c1c1c;transform:scaleX(1.0200);">16</span>
<span class="t" style="left:829.66px;top:643px;font-size:20px;color:#1c1c1c;transform:scaleX(1.0200);">75</span>
<span class="t" style="left:1012.22px;top:643px;font-size:20px;color:#1c1c1c;transform:scaleX(1.0200);">47</span>
<span class="t" style="left:132.40px;top:751px;font-size:20.6px;color:#2c3853;transform:scaleX(1.0397);font-weight:700;">To sum up C3:C8</span>
<span class="t" style="left:132.40px;top:805px;font-size:20.6px;color:#2c3853;transform:scaleX(1.0441);font-weight:700;">To sum up C3:C8 and E3:</span>
<span class="t" style="left:43.89px;top:21px;font-size:18.2px;color:#2f3b52;transform:scaleX(1.0051);">Menu</span>
<span class="t" style="left:447.49px;top:22px;font-size:18.6px;color:#ecfff9;transform:scaleX(1.0135);font-weight:700;">Home</span>
<span class="t" style="left:540.44px;top:21px;font-size:18.2px;color:#3c4456;transform:scaleX(0.9632);">Insert</span>
<span class="t" style="left:628.34px;top:21px;font-size:18.2px;color:#3c4456;transform:scaleX(0.9586);">Page Layout</span>
<span class="t" style="left:771.03px;top:21px;font-size:18.2px;color:#3c4456;transform:scaleX(0.9665);">Formulas</span>
<span class="t" style="left:886.44px;top:21px;font-size:18.2px;color:#3c4456;transform:scaleX(0.9608);">Data</span>
<span class="t" style="left:965.35px;top:21px;font-size:18.2px;color:#3c4456;transform:scaleX(0.9496);">Review</span>
<span class="t" style="left:1063.00px;top:21px;font-size:18.2px;color:#3c4456;transform:scaleX(0.9635);">View</span>
<span class="t" style="left:1143.30px;top:21px;font-size:18.2px;color:#3c4456;transform:scaleX(0.9843);">Tools</span>
<span class="t" style="left:1253.00px;top:21px;font-size:18.6px;color:#a0a5b0;transform:scaleX(1.0714);">Click to find commands</span>
<span class="t" style="left:7.42px;top:107px;font-size:18px;color:#acafb6;transform:scaleX(0.8774);">Paste</span>
<span class="t" style="left:103.60px;top:68px;font-size:18px;color:#363e50;transform:scaleX(0.9104);">Cut</span>
<span class="t" style="left:103.30px;top:105px;font-size:18px;color:#363e50;transform:scaleX(0.9686);">Copy</span>
<span class="t" style="left:168.50px;top:107px;font-size:18px;color:#acafb6;">Format</span>
<span class="t" style="left:172.56px;top:131px;font-size:18px;color:#acafb6;transform:scaleX(0.9440);">Painter</span>
<span class="t" style="left:257.20px;top:67px;font-size:18px;color:#3a4354;transform:scaleX(0.9371);">Open Sans</span>
<span class="t" style="left:441.29px;top:67px;font-size:18px;color:#3a4354;transform:scaleX(0.9052);">11</span>
<span class="t" style="left:816.18px;top:107px;font-size:18px;color:#acafb6;transform:scaleX(1.0245);">Merge and</span>
<span class="t" style="left:830.30px;top:131px;font-size:18px;color:#acafb6;transform:scaleX(0.9587);">Center</span>
<span class="t" style="left:923.30px;top:107px;font-size:18px;color:#acafb6;">Wrap</span>
<span class="t" style="left:930.50px;top:131px;font-size:18px;color:#acafb6;transform:scaleX(0.9754);">Text</span>
<span class="t" style="left:997.60px;top:67px;font-size:18px;color:#3a4354;transform:scaleX(0.9597);">General</span>
<span class="t" style="left:1207.10px;top:109px;font-size:18px;color:#363e50;transform:scaleX(1.0397);">Conditional</span>
<span class="t" style="left:1205.66px;top:133px;font-size:18px;color:#363e50;transform:scaleX(1.0355);">Formatting</span>
<span class="t" style="left:1348.12px;top:70px;font-size:18px;color:#acafb6;transform:scaleX(0.9841);">Format as Table</span>
<span class="t" style="left:1349.10px;top:108px;font-size:18px;color:#acafb6;transform:scaleX(0.9656);">Cell Style</span>
<span class="t" style="left:1519.70px;top:109px;font-size:18px;color:#363e50;transform:scaleX(1.1000);">AutoSum</span>
<span class="t" style="left:261.34px;top:97px;font-size:29px;color:#b7b7b9;transform:scaleX(0.8632);font-weight:700;">B</span>
<span class="t" style="left:523.80px;top:97px;font-size:23.5px;color:#bdbdbf;transform:scaleX(0.9000);">A</span>
<span class="t" style="left:546.10px;top:61px;font-size:28.8px;color:#c6c6c8;transform:scaleX(0.9050);">A</span>
<span class="t" style="left:580.10px;top:61px;font-size:28.8px;color:#c6c6c8;transform:scaleX(0.8950);">A</span>
<span class="t" style="left:1006.70px;top:103px;font-size:16.5px;color:#bdbdbf;">$</span>
<span class="t" style="left:1050.40px;top:99px;font-size:25px;color:#c2c2c4;transform:scaleX(0.8182);">%</span>
<span class="t" style="left:1082.20px;top:99px;font-size:14.2px;color:#bdbdbf;transform:scaleX(1.0429);">000</span>
<span class="t" style="left:1091.40px;top:105px;font-size:17px;color:#bdbdbf;font-weight:700;">,</span>
<span class="t" style="left:1129.01px;top:99px;font-size:14.2px;color:#bdbdbf;transform:scaleX(0.9870);">.0</span>
<span class="t" style="left:1119.32px;top:111px;font-size:14.2px;color:#bdbdbf;transform:scaleX(1.0833);">.00</span>
<span class="t" style="left:1154.51px;top:99px;font-size:14.2px;color:#bdbdbf;transform:scaleX(1.0939);">.00</span>
<span class="t" style="left:1164.41px;top:111px;font-size:14.2px;color:#bdbdbf;transform:scaleX(0.9870);">.0</span>
<span class="t" style="left:1546.04px;top:61px;font-size:42.5px;color:#5d6473;transform:scaleX(1.0783);">Σ</span>
<span class="t" style="left:99.01px;top:192px;font-size:18.5px;color:#3b3f48;transform:scaleX(0.9908);">IF</span>
<span class="t" style="left:331.60px;top:184px;font-size:26.5px;color:#666a72;transform:scaleX(1.1362);font-style:italic;font-family:'Liberation Serif',serif;">fx</span>
<span class="t" style="left:383.90px;top:189px;font-size:20px;color:#2a2a2a;transform:scaleX(0.9154);">=su</span>
<span class="t" style="left:379.10px;top:751px;font-size:19.6px;color:#2a2a2a;transform:scaleX(0.9827);z-index:3;">=su</span>
<span class="t" style="left:431.30px;top:798px;font-size:18px;color:#3d4352;transform:scaleX(0.9803);z-index:6;">SUBSTITUTE</span>
<span class="t" style="left:399.20px;top:797px;font-size:17px;color:#4c4c4c;transform:scaleX(1.2141);font-weight:700;font-style:italic;font-family:'Liberation Serif',serif;z-index:6;">fx</span>
<span class="t" style="left:431.30px;top:833px;font-size:18px;color:#3d4352;transform:scaleX(0.9791);z-index:6;">SUBTOTAL</span>
<span class="t" style="left:399.20px;top:832px;font-size:17px;color:#4c4c4c;transform:scaleX(1.2141);font-weight:700;font-style:italic;font-family:'Liberation Serif',serif;z-index:6;">fx</span>
<span class="t" style="left:431.30px;top:869px;font-size:18px;color:#3d4352;transform:scaleX(1.0563);z-index:6;">SUM</span>
<span class="t" style="left:399.20px;top:867px;font-size:17px;color:#4c4c4c;transform:scaleX(1.2141);font-weight:700;font-style:italic;font-family:'Liberation Serif',serif;z-index:6;">fx</span>
<span class="t" style="left:630.96px;top:813px;font-size:17.6px;color:#333;transform:scaleX(1.0439);z-index:6;">Replaces part of the old text with new text in a string.</span>
<span class="t" style="left:631.40px;top:846px;font-size:17.6px;color:#3977c4;transform:scaleX(1.0261);z-index:6;">See how to use this function</span>
</div>
</body>
</html>
